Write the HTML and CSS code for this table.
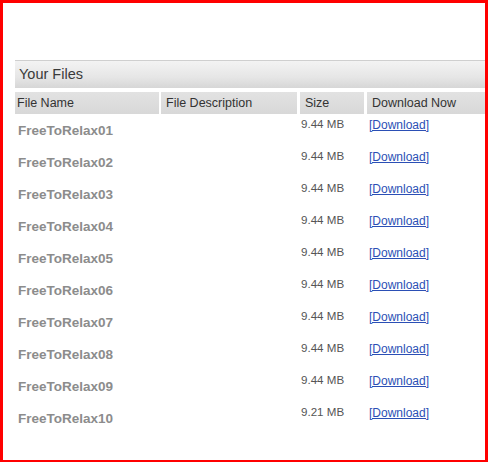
FILE: index.html
```html
<!DOCTYPE html>
<html>
<head>
<meta charset="utf-8">
<link rel="stylesheet" href="styles.css">
</head>
<body>
<div class="frame">
  <div class="files">
    <div class="title">Your Files</div>
    <div class="grid head">
      <div class="hcell first">File Name</div>
      <div class="hcell">File Description</div>
      <div class="hcell">Size</div>
      <div class="hcell">Download Now</div>
    </div>
    <div class="grid row"><div class="name">FreeToRelax01</div><div></div><div class="size">9.44 MB</div><div class="link"><a class="dl" href="#">[Download]</a></div></div>
    <div class="grid row"><div class="name">FreeToRelax02</div><div></div><div class="size">9.44 MB</div><div class="link"><a class="dl" href="#">[Download]</a></div></div>
    <div class="grid row"><div class="name">FreeToRelax03</div><div></div><div class="size">9.44 MB</div><div class="link"><a class="dl" href="#">[Download]</a></div></div>
    <div class="grid row"><div class="name">FreeToRelax04</div><div></div><div class="size">9.44 MB</div><div class="link"><a class="dl" href="#">[Download]</a></div></div>
    <div class="grid row"><div class="name">FreeToRelax05</div><div></div><div class="size">9.44 MB</div><div class="link"><a class="dl" href="#">[Download]</a></div></div>
    <div class="grid row"><div class="name">FreeToRelax06</div><div></div><div class="size">9.44 MB</div><div class="link"><a class="dl" href="#">[Download]</a></div></div>
    <div class="grid row"><div class="name">FreeToRelax07</div><div></div><div class="size">9.44 MB</div><div class="link"><a class="dl" href="#">[Download]</a></div></div>
    <div class="grid row"><div class="name">FreeToRelax08</div><div></div><div class="size">9.44 MB</div><div class="link"><a class="dl" href="#">[Download]</a></div></div>
    <div class="grid row"><div class="name">FreeToRelax09</div><div></div><div class="size">9.44 MB</div><div class="link"><a class="dl" href="#">[Download]</a></div></div>
    <div class="grid row"><div class="name">FreeToRelax10</div><div></div><div class="size">9.21 MB</div><div class="link"><a class="dl" href="#">[Download]</a></div></div>
  </div>
</div>
</body>
</html>
```
FILE: styles.css
```css
html, body {
  margin: 0;
  padding: 0;
  background: #fff;
}
.frame {
  box-sizing: border-box;
  width: 488px;
  height: 462px;
  border: 3px solid #ff0000;
  border-bottom-width: 2px;
  padding: 57px 0 0 12px;
  font-family: "Liberation Sans", Arial, sans-serif;
  overflow: hidden;
}
.title {
  box-sizing: border-box;
  height: 28px;
  border-top: 1px solid #cfcfcf;
  background: linear-gradient(#f3f3f3, #e6e6e6 60%, #d6d6d6);
  color: #3a3a3a;
  font-size: 14.5px;
  line-height: 26px;
  padding-left: 4px;
}
.grid {
  display: grid;
  grid-template-columns: 144px 136px 65px 1fr;
  column-gap: 2px;
}
.head {
  margin-top: 4px;
  height: 22px;
}
.hcell {
  background: linear-gradient(#e2e2e2, #d8d8d8);
  color: #333;
  font-size: 12.5px;
  line-height: 22px;
  padding-left: 5px;
}
.hcell.first {
  padding-left: 2px;
}
.hcell:nth-child(3), .hcell:nth-child(4) {
  margin-left: 1px;
}
.row {
  height: 32px;
}
.name {
  padding: 9px 0 0 3px;
  font-size: 13.5px;
  font-weight: bold;
  color: #8c8c8c;
  line-height: 15px;
}
.size {
  padding: 3px 0 0 1px;
  margin-left: 1px;
  font-size: 11.6px;
  color: #555;
  line-height: 14px;
}
.link {
  padding: 3px 0 0 2px;
  margin-left: 1px;
  line-height: 14px;
}
.dl {
  font-size: 12px;
  color: #2b4fb5;
  text-decoration: underline;
}
```
